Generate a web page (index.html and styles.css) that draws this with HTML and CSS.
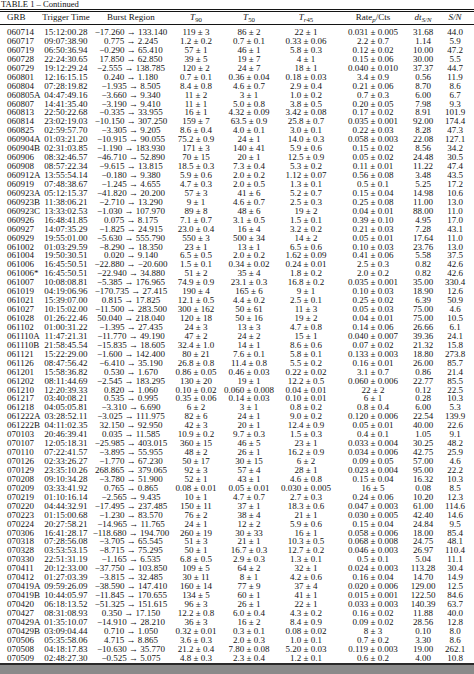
FILE: index.html
```html
<!DOCTYPE html>
<html lang="en">
<head>
<meta charset="utf-8">
<title>TABLE 1 – Continued</title>
<link rel="stylesheet" href="styles.css">
</head>
<body>
<div class="page">
<div class="title">TABLE 1 – Continued</div>
<div class="rule-double"></div>
<table class="data">
<colgroup>
<col class="c-grb"><col class="c-trig"><col class="c-burst"><col class="c-t90"><col class="c-t50"><col class="c-tr45"><col class="c-rate"><col class="c-dt"><col class="c-sn">
</colgroup>
<thead>
<tr><th class="grb">GRB</th><th>Trigger Time</th><th>Burst Region</th><th><i>T</i><sub>90</sub></th><th><i>T</i><sub>50</sub></th><th><i>T</i><sub><i>r</i>45</sub></th><th>Rate<sub><i>p</i></sub>/Cts</th><th><i>dt</i><sub><i>S/N</i></sub></th><th><i>S/N</i></th></tr>
</thead>
<tbody>
<tr><td class="grb">060714</td><td>15:12:00.28</td><td>−17.260 → 133.140</td><td>119 ± 3</td><td>86 ± 2</td><td>22 ± 1</td><td>0.031 ± 0.005</td><td>31.68</td><td>44.0</td></tr>
<tr><td class="grb">060717</td><td>09:07:38.90</td><td>0.775 → 2.245</td><td>1.2 ± 0.2</td><td>0.7 ± 0.1</td><td>0.33 ± 0.06</td><td>2.2 ± 0.7</td><td>1.14</td><td>5.9</td></tr>
<tr><td class="grb">060719</td><td>06:50:36.94</td><td>−0.290 → 65.410</td><td>57 ± 1</td><td>46 ± 1</td><td>5.8 ± 0.3</td><td>0.12 ± 0.02</td><td>10.00</td><td>47.2</td></tr>
<tr><td class="grb">060728</td><td>22:24:30.65</td><td>17.850 → 62.850</td><td>39 ± 5</td><td>19 ± 7</td><td>4 ± 1</td><td>0.15 ± 0.06</td><td>30.00</td><td>5.5</td></tr>
<tr><td class="grb">060729</td><td>19:12:29.24</td><td>−2.555 → 138.785</td><td>120 ± 2</td><td>24 ± 7</td><td>18 ± 1</td><td>0.040 ± 0.010</td><td>37.37</td><td>44.7</td></tr>
<tr><td class="grb">060801</td><td>12:16:15.15</td><td>0.240 → 1.180</td><td>0.7 ± 0.1</td><td>0.36 ± 0.04</td><td>0.18 ± 0.03</td><td>3.4 ± 0.9</td><td>0.56</td><td>11.9</td></tr>
<tr><td class="grb">060804</td><td>07:28:19.82</td><td>−1.935 → 8.505</td><td>8.4 ± 0.8</td><td>4.6 ± 0.7</td><td>2.9 ± 0.4</td><td>0.21 ± 0.06</td><td>8.70</td><td>8.6</td></tr>
<tr><td class="grb">060805A</td><td>04:47:49.16</td><td>−3.660 → 9.340</td><td>11 ± 2</td><td>3 ± 1</td><td>1.0 ± 0.2</td><td>0.7 ± 0.3</td><td>6.00</td><td>6.7</td></tr>
<tr><td class="grb">060807</td><td>14:41:35.40</td><td>−3.190 → 9.410</td><td>11 ± 1</td><td>5.0 ± 0.8</td><td>3.8 ± 0.5</td><td>0.20 ± 0.05</td><td>7.98</td><td>9.3</td></tr>
<tr><td class="grb">060813</td><td>22:50:22.68</td><td>−0.335 → 33.955</td><td>16 ± 1</td><td>4.32 ± 0.09</td><td>3.42 ± 0.08</td><td>0.17 ± 0.02</td><td>8.91</td><td>101.9</td></tr>
<tr><td class="grb">060814</td><td>23:02:19.03</td><td>−10.150 → 307.250</td><td>159 ± 7</td><td>63.5 ± 0.9</td><td>25.8 ± 0.7</td><td>0.035 ± 0.001</td><td>92.00</td><td>174.4</td></tr>
<tr><td class="grb">060825</td><td>02:59:57.70</td><td>−3.305 → 9.205</td><td>8.6 ± 0.4</td><td>4.0 ± 0.1</td><td>3.0 ± 0.1</td><td>0.22 ± 0.03</td><td>8.28</td><td>47.3</td></tr>
<tr><td class="grb">060904A</td><td>01:03:21.20</td><td>−10.915 → 90.055</td><td>75.2 ± 0.9</td><td>24 ± 1</td><td>14.0 ± 0.3</td><td>0.058 ± 0.003</td><td>22.08</td><td>127.1</td></tr>
<tr><td class="grb">060904B</td><td>02:31:03.85</td><td>−1.190 → 183.930</td><td>171 ± 3</td><td>140 ± 41</td><td>5.9 ± 0.6</td><td>0.15 ± 0.02</td><td>8.56</td><td>34.2</td></tr>
<tr><td class="grb">060906</td><td>08:32:46.57</td><td>−46.710 → 52.890</td><td>70 ± 15</td><td>20 ± 1</td><td>12.5 ± 0.9</td><td>0.05 ± 0.02</td><td>24.48</td><td>30.5</td></tr>
<tr><td class="grb">060908</td><td>08:57:22.34</td><td>−9.615 → 13.815</td><td>18.5 ± 0.3</td><td>7.3 ± 0.4</td><td>5.3 ± 0.2</td><td>0.11 ± 0.01</td><td>11.22</td><td>47.4</td></tr>
<tr><td class="grb">060912A</td><td>13:55:54.14</td><td>−0.180 → 9.380</td><td>5.9 ± 0.6</td><td>2.0 ± 0.2</td><td>1.12 ± 0.07</td><td>0.56 ± 0.08</td><td>3.48</td><td>43.5</td></tr>
<tr><td class="grb">060919</td><td>07:48:38.67</td><td>−1.245 → 4.655</td><td>4.7 ± 0.3</td><td>2.0 ± 0.5</td><td>1.3 ± 0.1</td><td>0.5 ± 0.1</td><td>5.25</td><td>17.2</td></tr>
<tr><td class="grb">060923A</td><td>05:12:15.37</td><td>−41.820 → 20.200</td><td>57 ± 3</td><td>41 ± 6</td><td>5.2 ± 0.7</td><td>0.15 ± 0.04</td><td>14.98</td><td>10.6</td></tr>
<tr><td class="grb">060923B</td><td>11:38:06.21</td><td>−2.710 → 13.290</td><td>9 ± 1</td><td>4.6 ± 0.7</td><td>2.5 ± 0.3</td><td>0.25 ± 0.08</td><td>11.00</td><td>13.0</td></tr>
<tr><td class="grb">060923C</td><td>13:33:02.53</td><td>−1.030 → 107.970</td><td>89 ± 8</td><td>48 ± 6</td><td>19 ± 2</td><td>0.04 ± 0.01</td><td>88.00</td><td>11.0</td></tr>
<tr><td class="grb">060926</td><td>16:48:41.85</td><td>0.075 → 8.175</td><td>7.1 ± 0.7</td><td>3.1 ± 0.5</td><td>1.5 ± 0.1</td><td>0.39 ± 0.10</td><td>4.95</td><td>17.0</td></tr>
<tr><td class="grb">060927</td><td>14:07:35.29</td><td>−1.825 → 24.915</td><td>23.0 ± 0.4</td><td>16 ± 4</td><td>3.2 ± 0.2</td><td>0.21 ± 0.03</td><td>7.28</td><td>43.1</td></tr>
<tr><td class="grb">060929</td><td>19:55:01.00</td><td>−5.630 → 555.790</td><td>550 ± 3</td><td>500 ± 34</td><td>14 ± 2</td><td>0.05 ± 0.01</td><td>17.64</td><td>11.0</td></tr>
<tr><td class="grb">061002</td><td>01:03:29.59</td><td>−8.290 → 18.350</td><td>23 ± 1</td><td>13 ± 1</td><td>6.5 ± 0.6</td><td>0.10 ± 0.03</td><td>23.76</td><td>13.0</td></tr>
<tr><td class="grb">061004</td><td>19:50:30.51</td><td>0.020 → 9.140</td><td>6.5 ± 0.5</td><td>2.0 ± 0.2</td><td>1.62 ± 0.09</td><td>0.41 ± 0.06</td><td>5.58</td><td>37.5</td></tr>
<tr><td class="grb">061006</td><td>16:45:50.51</td><td>−22.880 → −20.600</td><td>1.5 ± 0.1</td><td>0.34 ± 0.02</td><td>0.24 ± 0.01</td><td>2.5 ± 0.3</td><td>0.82</td><td>42.6</td></tr>
<tr><td class="grb">061006*</td><td>16:45:50.51</td><td>−22.940 → 34.880</td><td>51 ± 2</td><td>35 ± 4</td><td>1.8 ± 0.2</td><td>2.0 ± 0.2</td><td>0.82</td><td>42.6</td></tr>
<tr><td class="grb">061007</td><td>10:08:08.81</td><td>−5.385 → 176.965</td><td>74.9 ± 0.9</td><td>23.1 ± 0.3</td><td>16.8 ± 0.2</td><td>0.035 ± 0.001</td><td>35.00</td><td>330.4</td></tr>
<tr><td class="grb">061019</td><td>04:19:06.96</td><td>−170.735 → 27.415</td><td>190 ± 4</td><td>165 ± 6</td><td>9 ± 1</td><td>0.10 ± 0.03</td><td>18.90</td><td>12.6</td></tr>
<tr><td class="grb">061021</td><td>15:39:07.00</td><td>0.815 → 17.825</td><td>12.1 ± 0.5</td><td>4.4 ± 0.2</td><td>2.5 ± 0.1</td><td>0.25 ± 0.02</td><td>6.39</td><td>50.9</td></tr>
<tr><td class="grb">061027</td><td>10:15:02.00</td><td>−11.500 → 283.500</td><td>300 ± 162</td><td>50 ± 61</td><td>11 ± 3</td><td>0.05 ± 0.03</td><td>75.00</td><td>4.6</td></tr>
<tr><td class="grb">061028</td><td>01:26:22.46</td><td>50.040 → 218.040</td><td>120 ± 18</td><td>50 ± 16</td><td>19 ± 2</td><td>0.04 ± 0.01</td><td>75.00</td><td>10.5</td></tr>
<tr><td class="grb">061102</td><td>01:00:31.22</td><td>−1.395 → 27.435</td><td>24 ± 3</td><td>13 ± 3</td><td>4.7 ± 0.8</td><td>0.14 ± 0.06</td><td>26.66</td><td>6.1</td></tr>
<tr><td class="grb">061110A</td><td>11:47:21.31</td><td>−11.770 → 49.190</td><td>47 ± 2</td><td>24 ± 2</td><td>15 ± 1</td><td>0.040 ± 0.007</td><td>39.36</td><td>24.1</td></tr>
<tr><td class="grb">061110B</td><td>21:58:45.54</td><td>−15.835 → 18.605</td><td>32.4 ± 1.0</td><td>14 ± 1</td><td>8.6 ± 0.6</td><td>0.07 ± 0.02</td><td>21.32</td><td>15.8</td></tr>
<tr><td class="grb">061121</td><td>15:22:29.00</td><td>−1.600 → 142.400</td><td>80 ± 21</td><td>7.6 ± 0.1</td><td>5.8 ± 0.1</td><td>0.133 ± 0.003</td><td>18.80</td><td>273.8</td></tr>
<tr><td class="grb">061126</td><td>08:47:56.42</td><td>−6.410 → 35.190</td><td>26.8 ± 0.8</td><td>11.4 ± 0.8</td><td>5.5 ± 0.2</td><td>0.16 ± 0.01</td><td>26.00</td><td>85.7</td></tr>
<tr><td class="grb">061201</td><td>15:58:36.82</td><td>0.530 → 1.670</td><td>0.86 ± 0.05</td><td>0.46 ± 0.03</td><td>0.22 ± 0.02</td><td>3.1 ± 0.7</td><td>0.86</td><td>21.4</td></tr>
<tr><td class="grb">061202</td><td>08:11:44.69</td><td>−2.545 → 183.295</td><td>130 ± 20</td><td>19 ± 1</td><td>12.2 ± 0.5</td><td>0.060 ± 0.006</td><td>22.77</td><td>85.5</td></tr>
<tr><td class="grb">061210</td><td>12:20:39.33</td><td>0.820 → 1.060</td><td>0.10 ± 0.02</td><td>0.060 ± 0.008</td><td>0.04 ± 0.01</td><td>22 ± 2</td><td>0.12</td><td>22.5</td></tr>
<tr><td class="grb">061217</td><td>03:40:08.21</td><td>0.535 → 0.995</td><td>0.35 ± 0.06</td><td>0.14 ± 0.03</td><td>0.10 ± 0.01</td><td>6 ± 1</td><td>0.28</td><td>10.3</td></tr>
<tr><td class="grb">061218</td><td>04:05:05.81</td><td>−3.310 → 6.690</td><td>6 ± 2</td><td>3 ± 1</td><td>0.8 ± 0.2</td><td>0.8 ± 0.4</td><td>6.00</td><td>5.3</td></tr>
<tr><td class="grb">061222A</td><td>03:28:52.11</td><td>−3.025 → 111.975</td><td>82 ± 6</td><td>24 ± 1</td><td>9.0 ± 0.2</td><td>0.120 ± 0.006</td><td>22.54</td><td>139.9</td></tr>
<tr><td class="grb">061222B</td><td>04:11:02.35</td><td>32.150 → 92.950</td><td>42 ± 3</td><td>20 ± 1</td><td>12.4 ± 0.9</td><td>0.05 ± 0.01</td><td>40.00</td><td>22.6</td></tr>
<tr><td class="grb">070103</td><td>20:46:39.41</td><td>0.035 → 11.585</td><td>10.9 ± 0.2</td><td>9.7 ± 0.3</td><td>1.5 ± 0.3</td><td>0.4 ± 0.1</td><td>1.05</td><td>9.1</td></tr>
<tr><td class="grb">070107</td><td>12:05:18.31</td><td>−25.985 → 403.015</td><td>360 ± 15</td><td>46 ± 5</td><td>23 ± 1</td><td>0.033 ± 0.004</td><td>30.25</td><td>48.2</td></tr>
<tr><td class="grb">070110</td><td>07:22:41.57</td><td>−3.895 → 55.955</td><td>48 ± 2</td><td>26 ± 1</td><td>16.2 ± 0.9</td><td>0.034 ± 0.006</td><td>42.75</td><td>25.9</td></tr>
<tr><td class="grb">070126</td><td>02:33:26.27</td><td>−1.770 → 67.230</td><td>50 ± 17</td><td>30 ± 15</td><td>6 ± 2</td><td>0.09 ± 0.05</td><td>57.00</td><td>4.6</td></tr>
<tr><td class="grb">070129</td><td>23:35:10.26</td><td>268.865 → 379.065</td><td>92 ± 3</td><td>57 ± 4</td><td>28 ± 1</td><td>0.023 ± 0.004</td><td>95.00</td><td>22.2</td></tr>
<tr><td class="grb">070208</td><td>09:10:34.28</td><td>−3.780 → 51.900</td><td>52 ± 1</td><td>43 ± 1</td><td>4.6 ± 0.8</td><td>0.15 ± 0.04</td><td>16.32</td><td>10.3</td></tr>
<tr><td class="grb">070209</td><td>03:33:41.92</td><td>0.765 → 0.865</td><td>0.08 ± 0.01</td><td>0.05 ± 0.01</td><td>0.030 ± 0.005</td><td>16 ± 5</td><td>0.08</td><td>8.5</td></tr>
<tr><td class="grb">070219</td><td>01:10:16.14</td><td>−2.565 → 9.435</td><td>10 ± 1</td><td>4.7 ± 0.7</td><td>2.7 ± 0.3</td><td>0.24 ± 0.06</td><td>10.20</td><td>12.3</td></tr>
<tr><td class="grb">070220</td><td>04:44:32.91</td><td>−17.495 → 237.485</td><td>150 ± 11</td><td>37 ± 1</td><td>18.3 ± 0.6</td><td>0.047 ± 0.003</td><td>61.00</td><td>114.6</td></tr>
<tr><td class="grb">070223</td><td>01:15:00.68</td><td>−1.230 → 83.570</td><td>76 ± 2</td><td>38 ± 4</td><td>21 ± 1</td><td>0.030 ± 0.005</td><td>42.40</td><td>14.6</td></tr>
<tr><td class="grb">070224</td><td>20:27:58.21</td><td>−14.965 → 11.765</td><td>24 ± 1</td><td>12 ± 2</td><td>5.9 ± 0.6</td><td>0.15 ± 0.04</td><td>24.84</td><td>9.5</td></tr>
<tr><td class="grb">070306</td><td>16:41:28.17</td><td>−118.680 → 194.700</td><td>260 ± 19</td><td>30 ± 33</td><td>16 ± 1</td><td>0.058 ± 0.006</td><td>18.00</td><td>85.4</td></tr>
<tr><td class="grb">070318</td><td>07:28:56.08</td><td>−3.705 → 65.545</td><td>51 ± 3</td><td>21 ± 1</td><td>10.3 ± 0.5</td><td>0.068 ± 0.008</td><td>24.75</td><td>48.1</td></tr>
<tr><td class="grb">070328</td><td>03:53:53.15</td><td>−8.715 → 75.295</td><td>50 ± 1</td><td>16.7 ± 0.3</td><td>12.7 ± 0.2</td><td>0.046 ± 0.003</td><td>26.97</td><td>110.4</td></tr>
<tr><td class="grb">070330</td><td>22:51:31.19</td><td>−1.165 → 6.535</td><td>6.8 ± 0.5</td><td>2.9 ± 0.3</td><td>1.3 ± 0.1</td><td>0.5 ± 0.1</td><td>5.04</td><td>11.1</td></tr>
<tr><td class="grb">070411</td><td>20:12:33.00</td><td>−37.750 → 103.850</td><td>109 ± 5</td><td>64 ± 2</td><td>32 ± 1</td><td>0.024 ± 0.003</td><td>113.28</td><td>30.4</td></tr>
<tr><td class="grb">070412</td><td>01:27:03.39</td><td>−3.815 → 32.485</td><td>30 ± 11</td><td>8 ± 1</td><td>4.2 ± 0.6</td><td>0.16 ± 0.04</td><td>14.70</td><td>14.9</td></tr>
<tr><td class="grb">070419A</td><td>09:59:26.09</td><td>−38.590 → 147.410</td><td>160 ± 14</td><td>77 ± 9</td><td>37 ± 4</td><td>0.020 ± 0.006</td><td>129.00</td><td>12.5</td></tr>
<tr><td class="grb">070419B</td><td>10:44:05.97</td><td>−11.845 → 170.655</td><td>134 ± 5</td><td>60 ± 1</td><td>41 ± 1</td><td>0.015 ± 0.001</td><td>122.50</td><td>84.6</td></tr>
<tr><td class="grb">070420</td><td>06:18:13.52</td><td>−51.325 → 151.615</td><td>96 ± 3</td><td>26 ± 1</td><td>22 ± 1</td><td>0.033 ± 0.003</td><td>140.39</td><td>63.7</td></tr>
<tr><td class="grb">070427</td><td>08:31:08.93</td><td>0.350 → 17.150</td><td>12.2 ± 0.8</td><td>6.0 ± 0.4</td><td>4.3 ± 0.2</td><td>0.16 ± 0.02</td><td>11.88</td><td>40.0</td></tr>
<tr><td class="grb">070429A</td><td>01:35:10.07</td><td>−14.910 → 28.210</td><td>36 ± 3</td><td>16 ± 2</td><td>8.4 ± 0.9</td><td>0.09 ± 0.02</td><td>28.56</td><td>12.8</td></tr>
<tr><td class="grb">070429B</td><td>03:09:04.44</td><td>0.710 → 1.050</td><td>0.32 ± 0.01</td><td>0.3 ± 0.1</td><td>0.08 ± 0.02</td><td>8 ± 3</td><td>0.10</td><td>8.0</td></tr>
<tr><td class="grb">070506</td><td>05:35:58.06</td><td>4.715 → 8.865</td><td>3.6 ± 0.3</td><td>2.0 ± 0.3</td><td>1.0 ± 0.1</td><td>0.7 ± 0.2</td><td>3.30</td><td>8.6</td></tr>
<tr><td class="grb">070508</td><td>04:18:17.83</td><td>−10.630 → 35.770</td><td>21.2 ± 0.4</td><td>7.80 ± 0.08</td><td>5.20 ± 0.03</td><td>0.119 ± 0.003</td><td>19.00</td><td>262.1</td></tr>
<tr><td class="grb">070509</td><td>02:48:27.30</td><td>−0.525 → 5.075</td><td>4.8 ± 0.3</td><td>2.3 ± 0.4</td><td>1.2 ± 0.1</td><td>0.6 ± 0.2</td><td>4.00</td><td>10.8</td></tr>
</tbody>
</table>
<div class="bottom-band"></div>
</div>
</body>
</html>
```
FILE: styles.css
```css
html, body {
  margin: 0;
  padding: 0;
  background: #ffffff;
}

.page {
  width: 474px;
  height: 674px;
  overflow: hidden;
  color: #141414;
  font-family: "Liberation Serif", "DejaVu Serif", serif;
}

.title {
  height: 9px;
  padding-left: 1px;
  font-size: 8.6px;
  line-height: 8px;
  white-space: nowrap;
}

.rule-double {
  height: 1px;
  border-top: 1px solid #141414;
  border-bottom: 1px solid #141414;
}

.data {
  width: 474px;
  table-layout: fixed;
  border-collapse: separate;
  border-spacing: 0;
  font-size: 9px;
}

.c-grb { width: 40px; }
.c-trig { width: 52px; }
.c-burst { width: 78px; }
.c-t90 { width: 52px; }
.c-t50 { width: 54px; }
.c-tr45 { width: 60px; }
.c-rate { width: 74px; }
.c-dt { width: 26px; }
.c-sn { width: 38px; }

.data th {
  font-weight: normal;
  line-height: 10px;
  padding: 0 0 2px;
  border-bottom: 1px solid #141414;
  text-align: center;
  white-space: nowrap;
}

.data sub {
  font-size: 0.75em;
  line-height: 0;
  vertical-align: -0.3em;
}

.data td {
  padding: 0;
  line-height: 8.94px;
  text-align: center;
  white-space: nowrap;
}

.data tbody tr:first-child td {
  padding-top: 3px;
}

.data .grb {
  text-align: left;
  padding-left: 7px;
}

.bottom-band {
  height: 12px;
  border-top: 2px solid #2a2a2a;
  background: #8a8a8a;
}
```
